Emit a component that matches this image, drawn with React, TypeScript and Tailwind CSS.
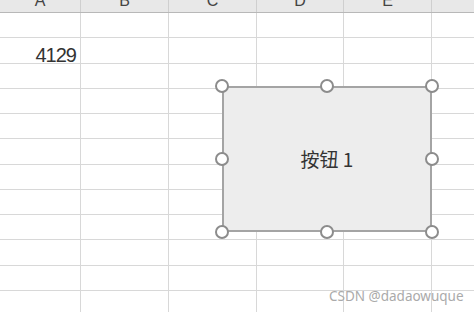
import React from "react";

const COLS = [
  { key: "A", w: "w-[81px]" },
  { key: "B", w: "w-[88px]" },
  { key: "C", w: "w-[88px]" },
  { key: "D", w: "w-[87px]" },
  { key: "E", w: "w-[88px]" },
  { key: "F", w: "w-[60px]" },
];

const ROWS = Array.from({ length: 12 }, (_, i) => i);

function Handle({ pos }: { pos: string }) {
  return (
    <span
      className={`absolute h-[14px] w-[14px] -translate-x-1/2 -translate-y-1/2 rounded-full border-2 border-[#8c8c8c] bg-white ${pos}`}
    />
  );
}

export default function App() {
  return (
    <div className="relative h-[312px] w-[474px] overflow-hidden bg-white font-['Liberation_Sans',sans-serif] text-[#333]">
      {/* column header, top part scrolled off */}
      <div className="-mt-[9px] flex h-[22px] border-b border-[#b8b8b8] bg-[#e8e8e8]">
        {COLS.map((c) => (
          <div
            key={c.key}
            className={`${c.w} flex shrink-0 items-end justify-center border-r border-[#cfcfcf] pb-[3px] text-[16px] leading-none text-[#444]`}
          >
            {c.key !== "F" && c.key}
          </div>
        ))}
      </div>

      {/* cells */}
      {ROWS.map((r) => (
        <div key={r} className="flex h-[25.25px] border-b border-[#d8d8d8]">
          {COLS.map((c) => (
            <div
              key={c.key}
              className={`${c.w} flex shrink-0 items-end justify-end border-r border-[#d8d8d8] pr-[4px] text-[20px] leading-[16px] tracking-[-1px]`}
            >
              {r === 1 && c.key === "A" ? "4129" : null}
            </div>
          ))}
        </div>
      ))}

      {/* form button */}
      <div className="absolute left-[222px] top-[86px] h-[146px] w-[210px]">
        <div className="flex h-full w-full items-center justify-center border-2 border-[#a4a4a4] bg-[#ededed] pt-[1px] font-['Noto_Sans_CJK_SC',sans-serif] text-[19px] text-[#333]">
          按钮 1
        </div>
        <Handle pos="left-0 top-0" />
        <Handle pos="left-1/2 top-0" />
        <Handle pos="left-full top-0" />
        <Handle pos="left-0 top-1/2" />
        <Handle pos="left-full top-1/2" />
        <Handle pos="left-0 top-full" />
        <Handle pos="left-1/2 top-full" />
        <Handle pos="left-full top-full" />
      </div>

      {/* watermark */}
      <div className="absolute left-[329px] top-[286px] font-['Noto_Sans',sans-serif] text-[13.5px] text-[#aaaaaa]">
        CSDN @dadaowuque
      </div>
    </div>
  );
}
